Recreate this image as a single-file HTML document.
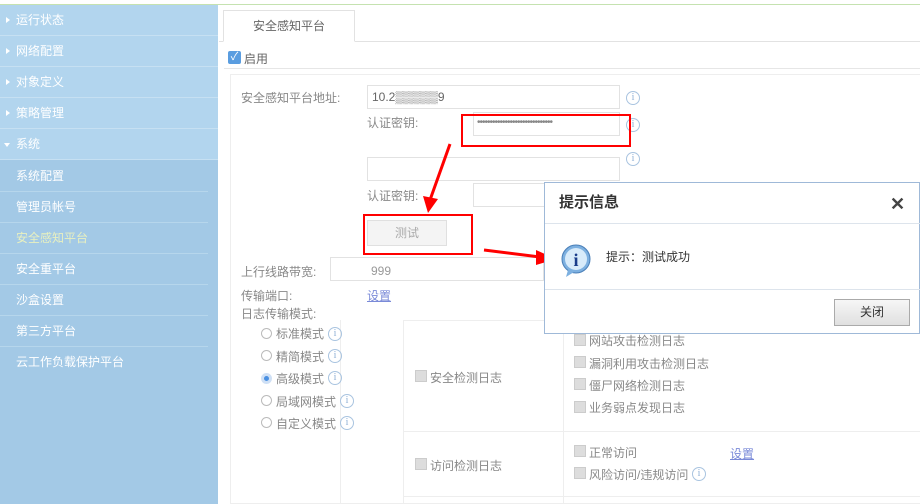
<!DOCTYPE html>
<html><head><meta charset="utf-8"><style>
*{margin:0;padding:0;box-sizing:border-box}
body{width:920px;height:504px;overflow:hidden;background:#fff;font-family:"Liberation Sans","Noto Sans CJK SC",sans-serif;font-size:12px;color:#555;position:relative}
.a{position:absolute}
#top{left:0;top:0;width:920px;height:5px;border-bottom:1px solid #c5e2b0}
#side{left:0;top:5px;width:218px;height:499px;background:#a3c9e6}
.m{position:absolute;left:0;width:218px;height:31px;background:#b2d5ee;border-bottom:1px solid #c6e0f2;color:#fff;font-size:12px;line-height:31px;padding-left:16px}
.m:before{content:"";position:absolute;left:6px;top:12px;border-left:4px solid #fff;border-top:3px solid transparent;border-bottom:3px solid transparent}
.m.o:before{left:4px;top:14px;border-top:4px solid #fff;border-left:3px solid transparent;border-right:3px solid transparent;border-bottom:0}
.s{position:absolute;left:0;width:208px;height:31px;border-bottom:1px solid #b6d6ec;color:#fff;line-height:31px;padding-left:16px}
.in{position:absolute;border:1px solid #e2e2e2;background:#fff;height:24px}
.info{position:absolute;width:14px;height:14px;border:1px solid #a9c4e0;border-radius:50%;color:#8fb0d6;font-size:10px;line-height:12px;text-align:center;font-family:"Liberation Serif",serif}
.red{position:absolute;border:2px solid #f00}
.rad{position:absolute;width:11px;height:11px;border:1px solid #bbb;border-radius:50%;background:#fff}
.cb{position:absolute;width:12px;height:12px;background:#ddd;border:1px solid #ccc}
.t{position:absolute;white-space:nowrap;color:#888}
</style></head><body>
<div class="a" id="top"></div>
<div class="a" id="side">
<div class="m" style="top:0">运行状态</div>
<div class="m" style="top:31px">网络配置</div>
<div class="m" style="top:62px">对象定义</div>
<div class="m" style="top:93px">策略管理</div>
<div class="m o" style="top:124px">系统</div>
<div class="s" style="top:156px">系统配置</div>
<div class="s" style="top:187px">管理员帐号</div>
<div class="s" style="top:218px;color:#e8f0c0">安全感知平台</div>
<div class="s" style="top:249px">安全重平台</div>
<div class="s" style="top:280px">沙盒设置</div>
<div class="s" style="top:311px">第三方平台</div>
<div class="s" style="top:342px;border:0">云工作负载保护平台</div>
</div>
<div class="a" style="left:219px;top:41px;width:701px;height:1px;background:#e2e2e2"></div>
<div class="a" style="left:223px;top:10px;width:132px;height:32px;border:1px solid #e2e2e2;border-bottom:1px solid #fff;background:#fff;text-align:center;line-height:30px;color:#666">安全感知平台</div>
<div class="a" style="left:228px;top:51px;width:13px;height:13px;background:#5a9de0;border-radius:2px;color:#fff;font-size:11px;line-height:13px;text-align:center">✓</div>
<div class="t" style="left:244px;top:50px;color:#666">启用</div>
<div class="a" style="left:224px;top:68px;width:696px;height:1px;background:#e6e6e6"></div>
<div class="a" style="left:230px;top:74px;width:690px;height:430px;border:1px solid #eee;border-right:0"></div>
<div class="t" style="left:241px;top:89px">安全感知平台地址:</div>
<div class="in" style="left:367px;top:85px;width:253px"></div>
<div class="t" style="left:372px;top:90px;color:#666">10.2▒▒▒▒▒9</div>
<div class="info" style="left:626px;top:91px">i</div>
<div class="t" style="left:367px;top:114px">认证密钥:</div>
<div class="in" style="left:473px;top:112px;width:147px"></div>
<div class="t" style="left:477px;top:117px;font-size:10px;letter-spacing:-1px;color:#888">••••••••••••••••••••••••••••••</div>
<div class="info" style="left:626px;top:118px">i</div>
<div class="red" style="left:461px;top:114px;width:170px;height:33px"></div>
<div class="in" style="left:367px;top:157px;width:253px"></div>
<div class="info" style="left:626px;top:152px">i</div>
<div class="t" style="left:367px;top:187px">认证密钥:</div>
<div class="in" style="left:473px;top:183px;width:80px"></div>
<div class="a" style="left:367px;top:220px;width:80px;height:26px;border:1px solid #e0e0e0;background:#f4f4f4;text-align:center;line-height:24px;color:#aaa">测试</div>
<div class="red" style="left:363px;top:214px;width:110px;height:41px"></div>
<div class="t" style="left:241px;top:263px">上行线路带宽:</div>
<div class="in" style="left:330px;top:257px;width:214px"></div>
<div class="t" style="left:371px;top:264px;color:#999">999</div>
<div class="t" style="left:241px;top:287px">传输端口:</div>
<div class="t" style="left:367px;top:287px;color:#7a8ad8;text-decoration:underline">设置</div>
<div class="t" style="left:241px;top:305px">日志传输模式:</div>
<div class="a" style="left:340px;top:320px;width:1px;height:184px;background:#eee"></div>
<div class="rad" style="left:261px;top:328px"></div><div class="t" style="left:276px;top:325px">标准模式</div><div class="info" style="left:328px;top:327px">i</div>
<div class="rad" style="left:261px;top:350px"></div><div class="t" style="left:276px;top:348px">精简模式</div><div class="info" style="left:328px;top:349px">i</div>
<div class="rad" style="left:261px;top:373px;border:3px solid #cfe0f5;background:#4a90e2"></div><div class="t" style="left:276px;top:370px">高级模式</div><div class="info" style="left:328px;top:371px">i</div>
<div class="rad" style="left:261px;top:395px"></div><div class="t" style="left:276px;top:393px">局域网模式</div><div class="info" style="left:340px;top:394px">i</div>
<div class="rad" style="left:261px;top:417px"></div><div class="t" style="left:276px;top:415px">自定义模式</div><div class="info" style="left:340px;top:416px">i</div>
<div class="a" style="left:403px;top:320px;width:517px;height:184px;border:1px solid #eee;border-right:0"></div>
<div class="a" style="left:563px;top:320px;width:1px;height:184px;background:#eee"></div>
<div class="a" style="left:403px;top:431px;width:517px;height:1px;background:#eee"></div>
<div class="a" style="left:403px;top:496px;width:517px;height:1px;background:#eee"></div>
<div class="cb" style="left:415px;top:370px"></div><div class="t" style="left:430px;top:369px">安全检测日志</div>
<div class="cb" style="left:415px;top:458px"></div><div class="t" style="left:430px;top:457px">访问检测日志</div>
<div class="cb" style="left:574px;top:334px"></div><div class="t" style="left:589px;top:332px">网站攻击检测日志</div>
<div class="cb" style="left:574px;top:356px"></div><div class="t" style="left:589px;top:355px">漏洞利用攻击检测日志</div>
<div class="cb" style="left:574px;top:378px"></div><div class="t" style="left:589px;top:377px">僵尸网络检测日志</div>
<div class="cb" style="left:574px;top:401px"></div><div class="t" style="left:589px;top:399px">业务弱点发现日志</div>
<div class="cb" style="left:574px;top:445px"></div><div class="t" style="left:589px;top:444px">正常访问</div>
<div class="t" style="left:730px;top:445px;color:#7a8ad8;text-decoration:underline">设置</div>
<div class="cb" style="left:574px;top:467px"></div><div class="t" style="left:589px;top:466px">风险访问/违规访问</div><div class="info" style="left:692px;top:467px">i</div>
<svg class="a" style="left:0;top:0" width="920" height="504">
<path d="M450 144 L430 200" stroke="#f00" stroke-width="3"/><path d="M423 196 L428 213 L438 199 Z" fill="#f00"/>
<path d="M484 250 L540 257" stroke="#f00" stroke-width="3"/><path d="M536 250 L556 259 L536 265 Z" fill="#f00"/>
</svg>
<div class="a" style="left:544px;top:182px;width:376px;height:152px;border:1px solid #9fb9d8;background:#fff"></div>
<div class="t" style="left:559px;top:191px;font-size:15px;font-weight:bold;color:#333">提示信息</div>
<div class="t" style="left:890px;top:194px;font-size:18px;color:#444;font-weight:bold">✕</div>
<div class="a" style="left:545px;top:223px;width:375px;height:1px;background:#dde4ec"></div>
<svg class="a" style="left:560px;top:244px" width="34" height="34"><circle cx="16" cy="15" r="14" fill="#7db0e0" stroke="#4a7fb8"/><path d="M8 26 L6 33 L14 28Z" fill="#7db0e0"/><circle cx="16" cy="15" r="11" fill="#d8ebfa"/><text x="16" y="22" font-size="18" font-weight="bold" text-anchor="middle" fill="#1a3c8a" font-family="Liberation Serif">i</text></svg>
<div class="t" style="left:606px;top:248px;color:#333">提示：测试成功</div>
<div class="a" style="left:545px;top:289px;width:375px;height:1px;background:#dde4ec"></div>
<div class="a" style="left:834px;top:299px;width:76px;height:27px;border:1px solid #aaa;background:linear-gradient(#f6f6f6,#e0e0e0);text-align:center;line-height:25px;color:#333">关闭</div>
</body></html>
